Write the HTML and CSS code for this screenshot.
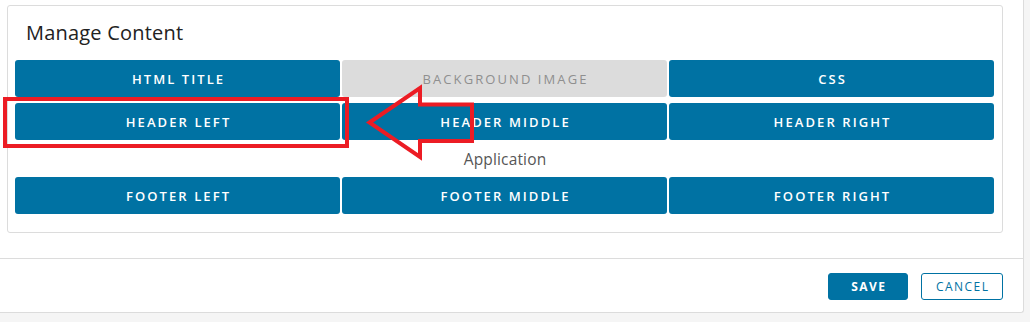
FILE: index.html
```html
<!DOCTYPE html>
<html lang="en">
<head>
<meta charset="utf-8">
<title>Manage Content</title>
<link rel="stylesheet" href="styles.css">
</head>
<body>
<div class="page">
  <div class="modal">
    <div class="modal-body">
      <div class="card">
        <div class="card-title">Manage Content</div>
        <div class="btn-row row-first">
          <button class="btn">HTML TITLE</button>
          <button class="btn btn-disabled">BACKGROUND IMAGE</button>
          <button class="btn">CSS</button>
        </div>
        <div class="btn-row row-second">
          <button class="btn">HEADER LEFT</button>
          <button class="btn">HEADER MIDDLE</button>
          <button class="btn">HEADER RIGHT</button>
        </div>
        <div class="app-label">Application</div>
        <div class="btn-row">
          <button class="btn">FOOTER LEFT</button>
          <button class="btn">FOOTER MIDDLE</button>
          <button class="btn">FOOTER RIGHT</button>
        </div>
      </div>
    </div>
    <div class="modal-footer">
      <button class="fbtn fbtn-primary">SAVE</button>
      <button class="fbtn fbtn-outline">CANCEL</button>
    </div>
  </div>
  <svg class="annotation" width="1030" height="322" viewBox="0 0 1030 322" aria-hidden="true">
    <rect x="5" y="99" width="342" height="47" fill="none" stroke="#ec1c24" stroke-width="4"/>
    <polygon points="369.5,122.5 420,88 420,104.5 472,104.5 472,141 420,141 420,157" fill="none" stroke="#ec1c24" stroke-width="4" stroke-linejoin="miter"/>
  </svg>
</div>
</body>
</html>
```
FILE: styles.css
```css
html, body {
  margin: 0;
  padding: 0;
}
body {
  background: #f5f5f5;
  font-family: "Open Sans", "Liberation Sans", sans-serif;
  width: 1030px;
  height: 322px;
  overflow: hidden;
}
.page {
  position: relative;
  width: 1030px;
  height: 322px;
}
.modal {
  width: 1023px;
  background: #ffffff;
  border-right: 1px solid #dcdcdc;
  border-bottom: 1px solid #dcdcdc;
  border-bottom-right-radius: 3px;
}
.modal-body {
  padding: 5px 20px 25px 7px;
}
.card {
  box-sizing: border-box;
  width: 996px;
  height: 228px;
  border: 1px solid #dcdcdc;
  border-radius: 3px;
  padding: 0 7px 0 7px;
}
.card-title {
  height: 54px;
  box-sizing: border-box;
  padding: 14px 0 0 11px;
  font-size: 20px;
  line-height: 26px;
  color: #222;
  font-weight: 400;
  letter-spacing: 0.01em;
}
.btn-row {
  display: grid;
  grid-template-columns: 325px 325px 325px;
  column-gap: 2px;
}
.row-first {
  margin-bottom: 6px;
}
.btn {
  height: 37px;
  border: none;
  border-radius: 3px;
  background: #0072a3;
  color: #ffffff;
  font-family: "Open Sans", "Liberation Sans", sans-serif;
  font-size: 13px;
  font-weight: 600;
  letter-spacing: 0.16em;
  padding: 0 0 0 0.16em;
  margin: 0;
}
.btn-disabled {
  background: #dcdcdc;
  color: #8f8f8f;
  font-weight: 500;
}
.app-label {
  height: 37px;
  line-height: 38px;
  text-align: center;
  font-size: 15.5px;
  letter-spacing: 0.01em;
  color: #565656;
}
.modal-footer {
  border-top: 1px solid #dcdcdc;
  padding: 14px 20px 12px 0;
  display: flex;
  justify-content: flex-end;
  gap: 13px;
}
.fbtn {
  height: 27px;
  box-sizing: border-box;
  border-radius: 3px;
  font-family: "Open Sans", "Liberation Sans", sans-serif;
  font-size: 12px;
  letter-spacing: 0.12em;
  padding: 0 0 0 0.12em;
  margin: 0;
}
.fbtn-primary {
  width: 80px;
  background: #0072a3;
  border: 1px solid #0072a3;
  color: #ffffff;
  font-weight: 700;
}
.fbtn-outline {
  width: 82px;
  background: #ffffff;
  border: 1px solid #0072a3;
  color: #0072a3;
  font-weight: 500;
}
.annotation {
  position: absolute;
  left: 0;
  top: 0;
  pointer-events: none;
}
```
